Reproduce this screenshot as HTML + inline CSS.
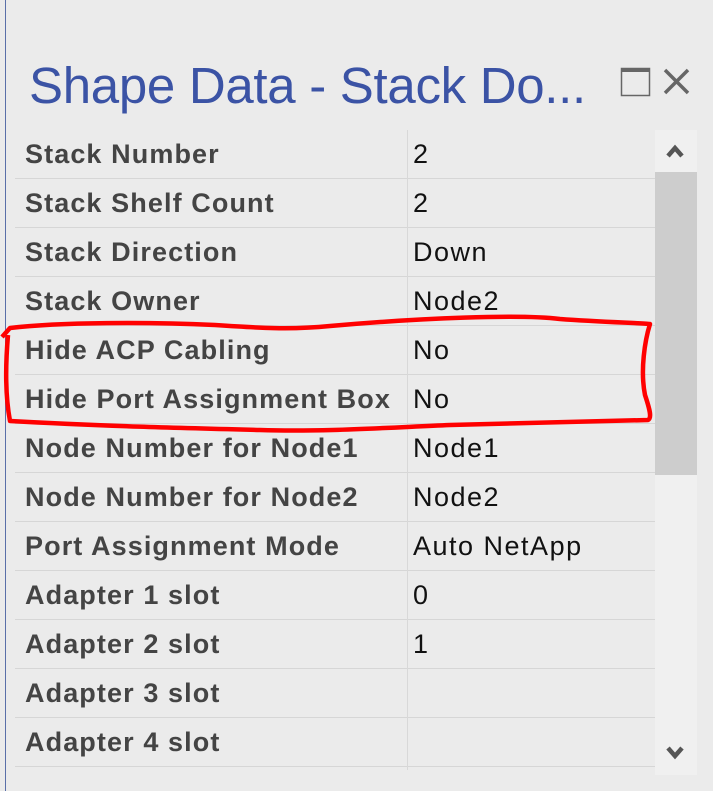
<!DOCTYPE html>
<html><head><style>
html,body{margin:0;padding:0}
body{width:713px;height:791px;background:#ebebeb;position:relative;overflow:hidden;font-family:"Liberation Sans",sans-serif}
.lb{position:absolute;left:5px;top:0;width:1px;height:791px;background:#5a6fa8}
.title{position:absolute;left:29px;top:56px;font-size:51px;color:#3b53a5;white-space:nowrap;letter-spacing:-0.3px}
.row{position:absolute;left:15px;width:640px;height:49px;border-bottom:1px solid #d6d6d6;box-sizing:border-box}
.k{position:absolute;left:10px;top:9px;font-size:27px;font-weight:bold;color:#444;white-space:nowrap;letter-spacing:1.1px}
.v{position:absolute;left:398px;top:9px;font-size:27px;color:#111;white-space:nowrap;letter-spacing:1.5px}
.div{position:absolute;left:407px;top:130px;width:1px;height:640px;background:#d8d8d8}
.sb{position:absolute;left:655px;top:130px;width:42px;height:645px;background:#f0f0f0}
.th{position:absolute;left:655px;top:172px;width:42px;height:303px;background:#cdcdcd}
</style></head><body>
<div class="lb"></div>
<div class="title">Shape Data - Stack Do...</div>
<svg style="position:absolute;left:618px;top:66px" width="80" height="32">
<rect x="3.5" y="2.5" width="28" height="27" fill="none" stroke="#666" stroke-width="1.5"/>
<rect x="3" y="2" width="29" height="4" fill="#666"/>
<path d="M47 4 L70 27 M70 4 L47 27" stroke="#666" stroke-width="3.5"/>
</svg>
<div class="row" style="top:130px"><div class="k">Stack Number</div><div class="v">2</div></div>
<div class="row" style="top:179px"><div class="k">Stack Shelf Count</div><div class="v">2</div></div>
<div class="row" style="top:228px"><div class="k">Stack Direction</div><div class="v">Down</div></div>
<div class="row" style="top:277px"><div class="k">Stack Owner</div><div class="v">Node2</div></div>
<div class="row" style="top:326px"><div class="k">Hide ACP Cabling</div><div class="v">No</div></div>
<div class="row" style="top:375px"><div class="k">Hide Port Assignment Box</div><div class="v">No</div></div>
<div class="row" style="top:424px"><div class="k">Node Number for Node1</div><div class="v">Node1</div></div>
<div class="row" style="top:473px"><div class="k">Node Number for Node2</div><div class="v">Node2</div></div>
<div class="row" style="top:522px"><div class="k">Port Assignment Mode</div><div class="v">Auto NetApp</div></div>
<div class="row" style="top:571px"><div class="k">Adapter 1 slot</div><div class="v">0</div></div>
<div class="row" style="top:620px"><div class="k">Adapter 2 slot</div><div class="v">1</div></div>
<div class="row" style="top:669px"><div class="k">Adapter 3 slot</div><div class="v"></div></div>
<div class="row" style="top:718px"><div class="k">Adapter 4 slot</div><div class="v"></div></div>
<div class="div"></div>
<div class="sb"></div><div class="th"></div>
<svg style="position:absolute;left:655px;top:130px" width="42" height="645">
<path d="M13 26 L20 18 L27 26" fill="none" stroke="#555" stroke-width="4.5"/>
<path d="M13 618 L20 626 L27 618" fill="none" stroke="#555" stroke-width="4.5"/>
</svg>
<svg style="position:absolute;left:0;top:0" width="713" height="791">
<path d="M2 337 L10 328 C60 322 150 322 215 325 C260 328 290 330 330 326 C420 318 520 314 560 319 C600 322 640 323 650 324 C645 340 640 370 645 395 C650 410 652 418 648 420 C590 422 520 423 450 425 C380 428 320 432 260 430 C180 428 100 426 10 421 C6 400 5 370 8 335" fill="none" stroke="#f00" stroke-width="4.5" stroke-linejoin="round"/>
</svg>
</body></html>
